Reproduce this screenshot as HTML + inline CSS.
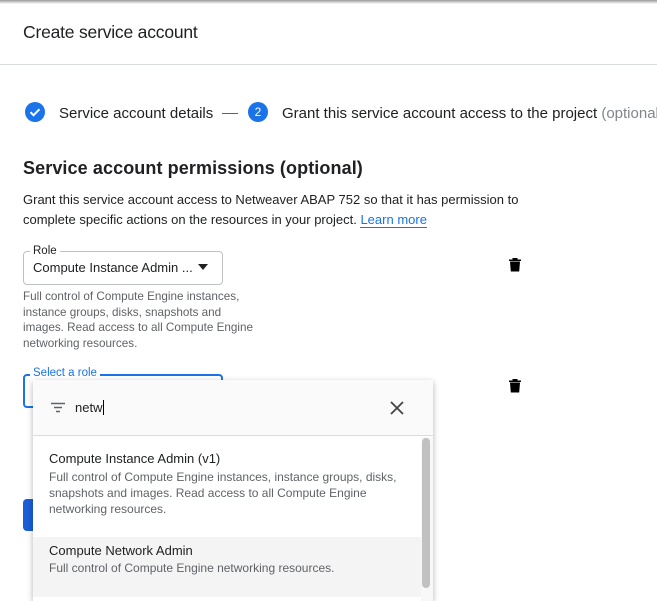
<!DOCTYPE html>
<html><head><meta charset="utf-8"><style>
*{margin:0;padding:0;box-sizing:border-box}
body{width:657px;height:601px;overflow:hidden;background:#fff;font-family:"Liberation Sans",Arial,sans-serif;color:#202124;position:relative}
.a{position:absolute;white-space:nowrap}
</style></head><body>
<div class="a" style="left:0;top:0;width:657px;height:4px;background:linear-gradient(#9a9a9a,#fff)"></div>
<div class="a" style="left:23px;top:22px;font-size:17.5px;letter-spacing:-0.2px">Create service account</div>
<div class="a" style="left:0;top:64px;width:657px;height:1px;background:#dadce0"></div>

<svg class="a" style="left:24px;top:101px" width="22" height="22" viewBox="0 0 22 22"><circle cx="11" cy="11" r="10" fill="#1a73e8"/><path d="M6.5 11.2l3 3 6-6" stroke="#fff" stroke-width="2" fill="none"/></svg>
<div class="a" style="left:59px;top:105px;font-size:15px">Service account details</div>
<div class="a" style="left:222px;top:113px;width:16px;height:1px;background:#5f6368"></div>
<div class="a" style="left:248px;top:102px;width:20px;height:20px;border-radius:50%;background:#1a73e8;color:#fff;font-size:12px;text-align:center;line-height:20px">2</div>
<div class="a" style="left:282px;top:105px;font-size:15px">Grant this service account access to the project <span style="color:#80868b">(optional)</span></div>

<div class="a" style="left:23px;top:158px;font-size:18px;font-weight:bold;letter-spacing:0.1px">Service account permissions (optional)</div>
<div class="a" style="left:23px;top:190px;font-size:13px;line-height:20px">Grant this service account access to Netweaver ABAP 752 so that it has permission to<br>complete specific actions on the resources in your project. <span style="color:#1a73e8;border-bottom:1px solid #1a73e8">Learn more</span></div>

<div class="a" style="left:23px;top:251px;width:200px;height:34px;border:1px solid #bdc1c6;border-radius:4px"></div>
<div class="a" style="left:30px;top:245px;background:#fff;padding:0 3px;font-size:11.5px">Role</div>
<div class="a" style="left:33px;top:260px;font-size:13px">Compute Instance Admin ...</div>
<svg class="a" style="left:197px;top:263px" width="12" height="8"><path d="M1 1h10l-5 6z" fill="#202124"/></svg>
<div class="a" style="left:23px;top:289px;font-size:11.7px;line-height:15.5px;color:#5f6368">Full control of Compute Engine instances,<br>instance groups, disks, snapshots and<br>images. Read access to all Compute Engine<br>networking resources.</div>
<svg class="a" style="left:508px;top:257px" width="14" height="16" viewBox="0 0 14 16"><path d="M1 2.5h12v1.5H1zM4.5 1h5v1.5h-5zM2 4.5h10l-.8 10H2.8z" fill="#000"/></svg>
<svg class="a" style="left:508px;top:378px" width="14" height="16" viewBox="0 0 14 16"><path d="M1 2.5h12v1.5H1zM4.5 1h5v1.5h-5zM2 4.5h10l-.8 10H2.8z" fill="#000"/></svg>

<div class="a" style="left:23px;top:374px;width:200px;height:34px;border:2px solid #1a73e8;border-radius:4px"></div>
<div class="a" style="left:30px;top:367px;background:#fff;padding:0 3px;font-size:11.5px;color:#1a73e8">Select a role</div>

<div class="a" style="left:23px;top:499px;width:30px;height:32px;background:#1a5fd6;border-radius:4px"></div>

<div class="a" style="left:33px;top:380px;width:400px;height:221px;background:#fff;box-shadow:0 2px 6px rgba(0,0,0,.3)">
 <div class="a" style="left:0;top:0;width:400px;height:56px;background:#fafafa;border-bottom:1px solid #dadce0"></div>
 <svg class="a" style="left:17px;top:22px" width="16" height="12"><path d="M1 1.5h14M4 5.5h8M6 9.5h4" stroke="#5f6368" stroke-width="1.6"/></svg>
 <div class="a" style="left:42px;top:20px;font-size:13px">netw<span style="border-left:1px solid #000;margin-left:1px"></span></div>
 <svg class="a" style="left:357px;top:21px" width="14" height="14"><path d="M1 1l12 12M13 1L1 13" stroke="#444" stroke-width="1.8"/></svg>
 <div class="a" style="left:0;top:157px;width:388px;height:60px;background:#f4f4f4"></div>
 <div class="a" style="left:16px;top:71px;font-size:13px">Compute Instance Admin (v1)</div>
 <div class="a" style="left:16px;top:89px;font-size:12px;line-height:16px;color:#5f6368">Full control of Compute Engine instances, instance groups, disks,<br>snapshots and images. Read access to all Compute Engine<br>networking resources.</div>
 <div class="a" style="left:16px;top:163px;font-size:13px">Compute Network Admin</div>
 <div class="a" style="left:16px;top:181px;font-size:12px;color:#5f6368">Full control of Compute Engine networking resources.</div>
 <div class="a" style="left:388px;top:57px;width:12px;height:164px;background:#f8f8f8"></div>
 <div class="a" style="left:389px;top:58px;width:8px;height:150px;background:#c1c1c1;border-radius:4px"></div>
</div>
</body></html>
